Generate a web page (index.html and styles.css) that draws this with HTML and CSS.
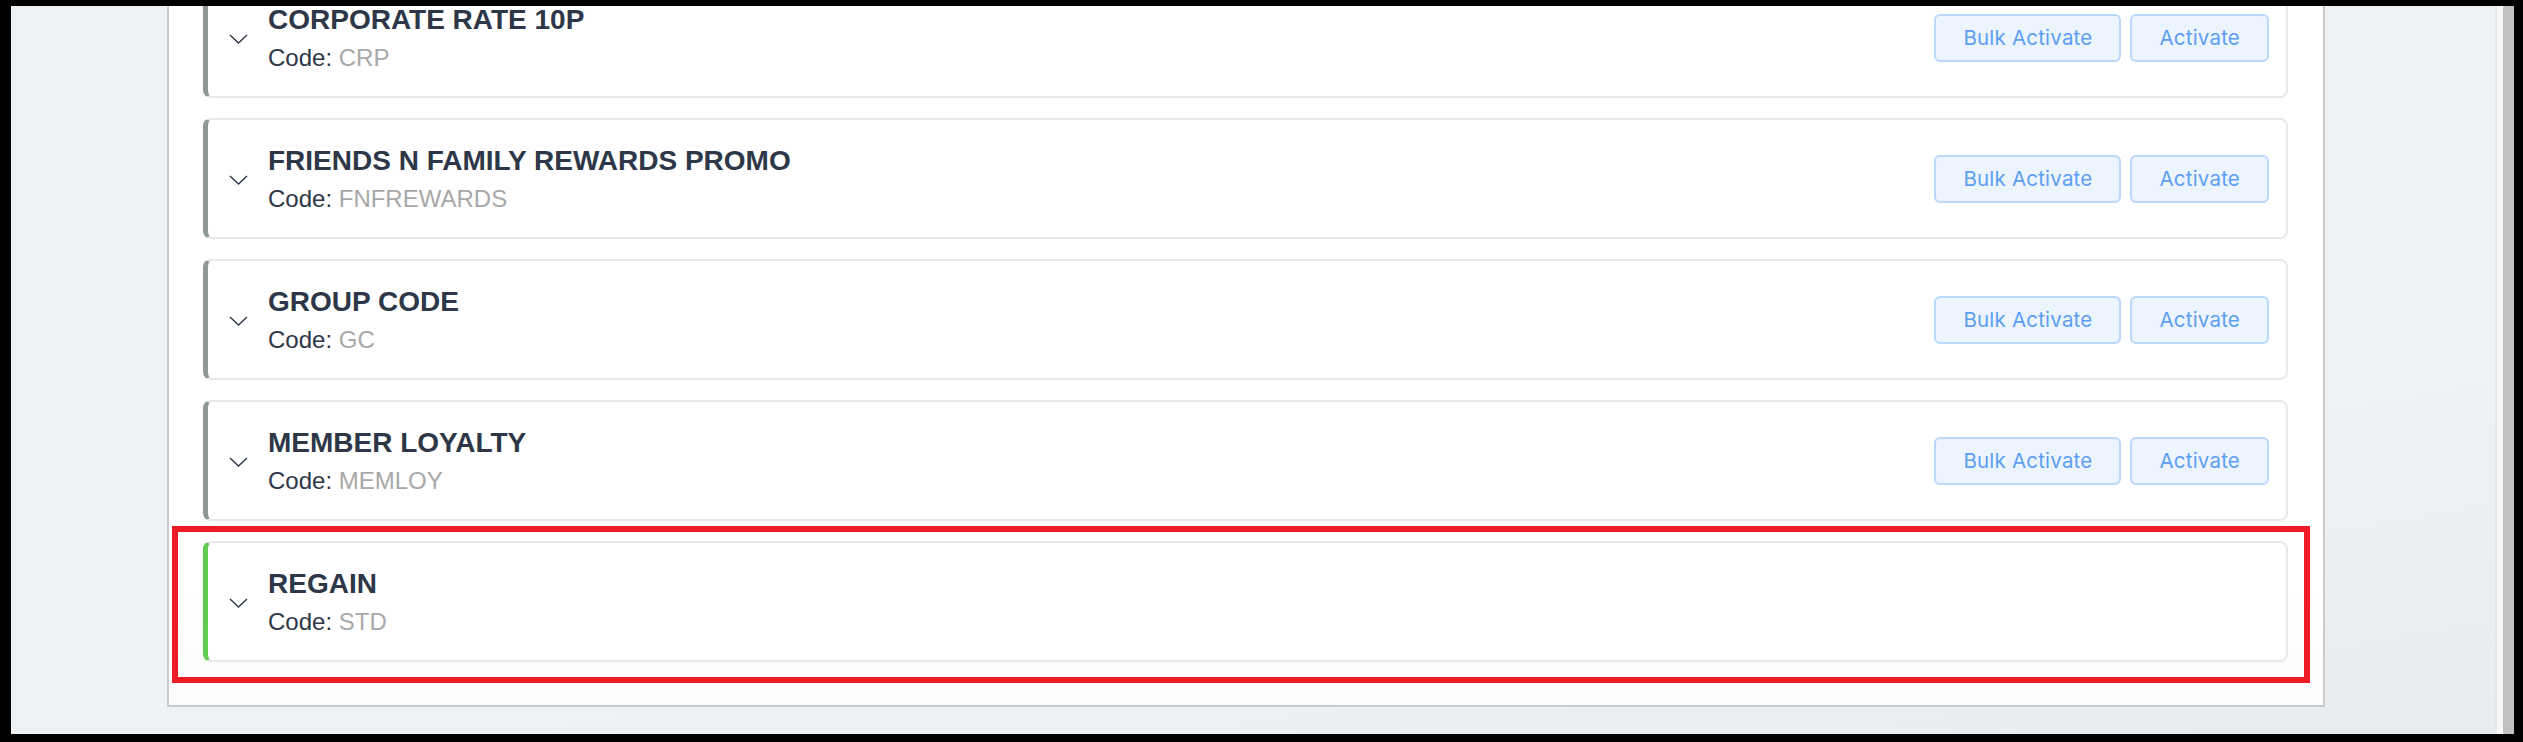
FILE: index.html
```html
<!DOCTYPE html>
<html lang="en">
<head>
<meta charset="utf-8">
<title>Rate codes</title>
<link rel="stylesheet" href="styles.css">
</head>
<body>
<div class="frame">
  <main class="stage">
    <section class="panel">
      <div class="card">
        <svg class="chev" viewBox="0 0 19 10"><polyline points="1,1 9.5,9 18,1"/></svg>
        <div class="info">
          <div class="title">CORPORATE RATE 10P</div>
          <div class="code">Code: <span class="val">CRP</span></div>
        </div>
        <div class="actions">
          <button class="btn">Bulk Activate</button>
          <button class="btn">Activate</button>
        </div>
      </div>
      <div class="card">
        <svg class="chev" viewBox="0 0 19 10"><polyline points="1,1 9.5,9 18,1"/></svg>
        <div class="info">
          <div class="title">FRIENDS N FAMILY REWARDS PROMO</div>
          <div class="code">Code: <span class="val">FNFREWARDS</span></div>
        </div>
        <div class="actions">
          <button class="btn">Bulk Activate</button>
          <button class="btn">Activate</button>
        </div>
      </div>
      <div class="card">
        <svg class="chev" viewBox="0 0 19 10"><polyline points="1,1 9.5,9 18,1"/></svg>
        <div class="info">
          <div class="title">GROUP CODE</div>
          <div class="code">Code: <span class="val">GC</span></div>
        </div>
        <div class="actions">
          <button class="btn">Bulk Activate</button>
          <button class="btn">Activate</button>
        </div>
      </div>
      <div class="card">
        <svg class="chev" viewBox="0 0 19 10"><polyline points="1,1 9.5,9 18,1"/></svg>
        <div class="info">
          <div class="title">MEMBER LOYALTY</div>
          <div class="code">Code: <span class="val">MEMLOY</span></div>
        </div>
        <div class="actions">
          <button class="btn">Bulk Activate</button>
          <button class="btn">Activate</button>
        </div>
      </div>
      <div class="highlight">
        <div class="card active">
          <svg class="chev" viewBox="0 0 19 10"><polyline points="1,1 9.5,9 18,1"/></svg>
          <div class="info">
            <div class="title">REGAIN</div>
            <div class="code">Code: <span class="val">STD</span></div>
          </div>
        </div>
      </div>
    </section>
  </main>
  <div class="scrollbar">
    <div class="track-edge"></div>
    <div class="track"></div>
    <div class="thumb"></div>
  </div>
</div>
</body>
</html>
```

FILE: styles.css
```css
* { box-sizing: border-box; }
html, body { margin: 0; height: 100%; }
body {
  background: #000;
  font-family: "Liberation Sans", Arial, sans-serif;
  overflow: hidden;
}
.frame {
  height: 742px;
  padding: 6px 9px 8px 11px;
  display: flex;
}
.stage {
  flex: 1;
  display: flex;
  flex-direction: column;
  justify-content: flex-end;
  overflow: hidden;
  background: linear-gradient(170deg, #eff2f5 0%, #eff2f5 70%, #e9ecef 100%);
  padding: 0 170px 27px 156px;
}
.panel {
  flex-shrink: 0;
  background: linear-gradient(180deg, #ffffff 85%, #fbfbfb 100%);
  border: 2px solid #cbcbcb;
  border-top: none;
  padding: 0 35px 43px 34px;
  display: flex;
  flex-direction: column;
  gap: 20px;
}
.card {
  height: 121px;
  display: flex;
  align-items: center;
  background: #fff;
  border: 2px solid #e8e8e8;
  border-left: 5px solid #8e9993;
  border-radius: 8px;
  padding: 0 17px 0 21px;
}
.card.active { border-left-color: #5fcb50; }
.chev {
  width: 19px;
  height: 10px;
  flex-shrink: 0;
  margin-right: 20px;
  margin-top: 2px;
}
.chev polyline {
  fill: none;
  stroke: #2d3748;
  stroke-width: 1.4;
}
.info { flex: 1; }
.title {
  font-size: 28px;
  line-height: 34px;
  font-weight: 700;
  color: #2d3748;
}
.code {
  margin-top: 7px;
  font-size: 24px;
  line-height: 28px;
  color: #2d3748;
}
.val { color: #a8a8a8; }
.actions {
  display: flex;
  gap: 9px;
}
.btn {
  height: 48px;
  padding: 0 27px;
  border: 2px solid #b9d8fb;
  border-radius: 6px;
  background: #ecf4fe;
  color: #5d9ef2;
  font-family: Inter, "Noto Sans", sans-serif;
  font-size: 20.5px;
  letter-spacing: 0.2px;
}
.highlight { position: relative; }
.highlight::after {
  content: "";
  position: absolute;
  top: -15px;
  left: -31px;
  right: -22px;
  bottom: -21px;
  border: 6px solid #ed1c24;
  pointer-events: none;
}
.scrollbar {
  width: 19px;
  display: flex;
}
.track-edge { width: 2px; background: #e6e6e6; }
.track { width: 6px; background: #f8f8f8; }
.thumb { flex: 1; background: #c1c1c1; }
```
